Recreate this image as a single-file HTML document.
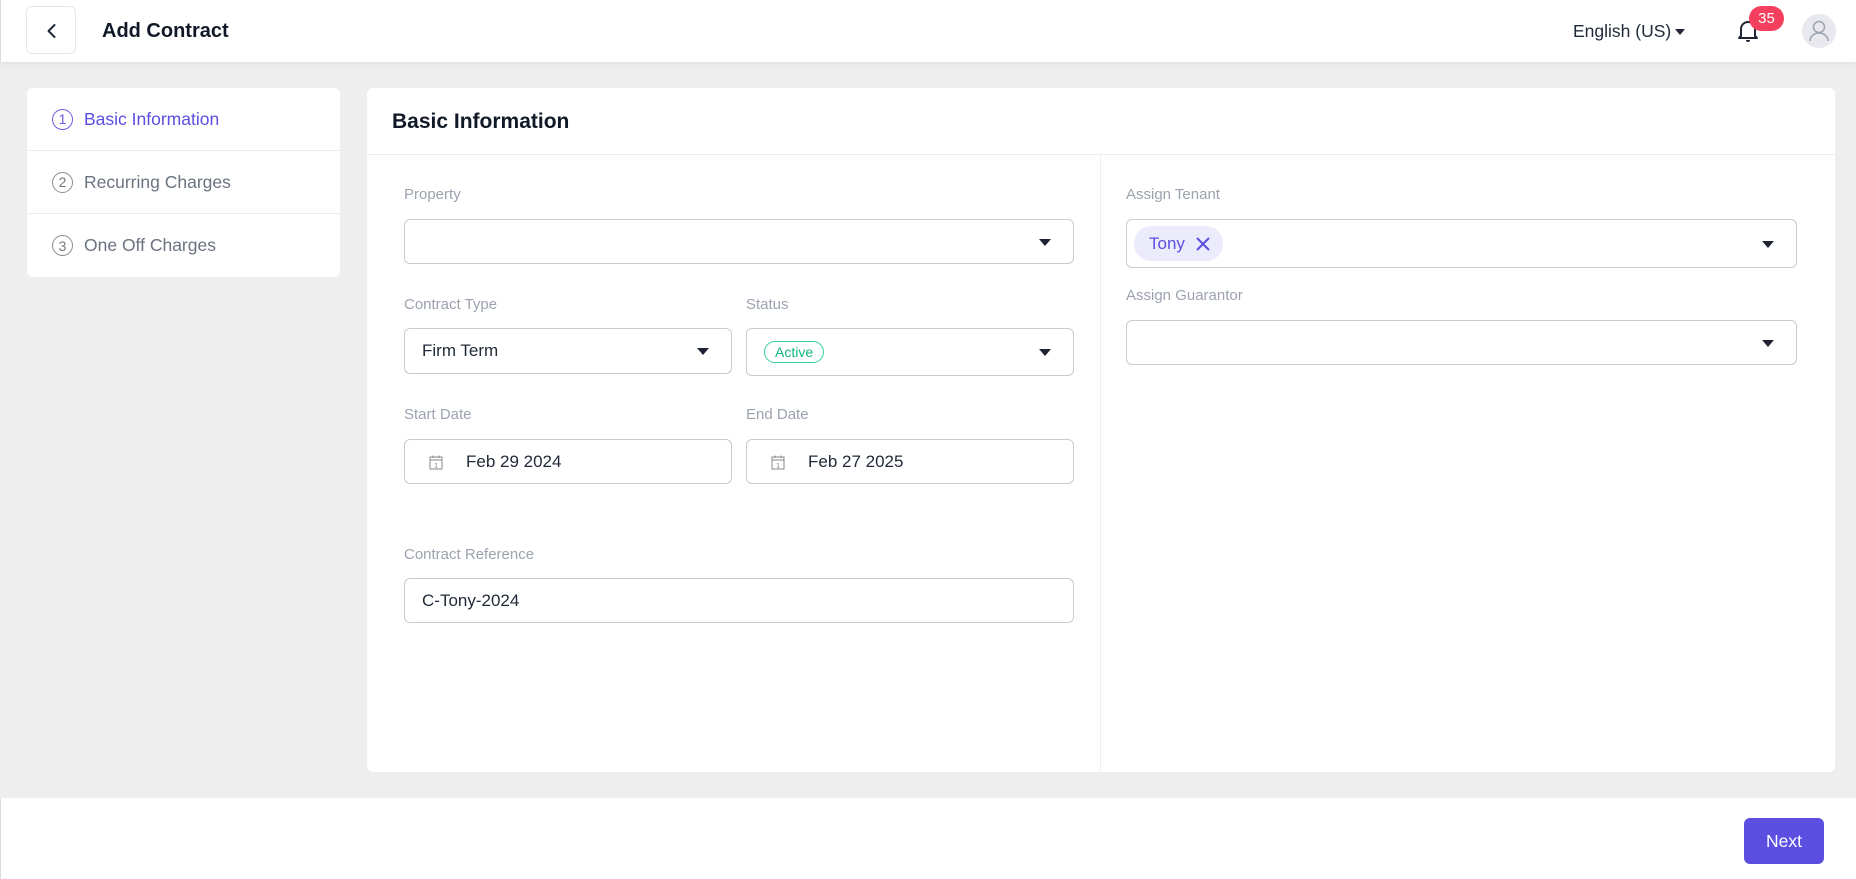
<!DOCTYPE html>
<html><head><meta charset="utf-8"><style>
*{box-sizing:border-box;margin:0;padding:0}
body{width:1856px;height:879px;background:#eeeeee;font-family:"Liberation Sans",sans-serif;position:relative;overflow:hidden;color:#1f2937}
.abs{position:absolute}
.hdr{left:0;top:0;width:1856px;height:62px;background:#fff;box-shadow:0 2px 6px rgba(0,0,0,.06);border-left:1px solid #ddd}
.back{left:26px;top:6px;width:50px;height:48px;border:1px solid #e5e7eb;border-radius:6px}
.side{left:27px;top:88px;width:313px;height:189px;background:#fff;border-radius:6px}
.item{position:absolute;left:0;width:313px;height:63px;border-bottom:1px solid #eee;display:flex;align-items:center;padding-left:25px;font-size:17.5px;color:#6b7280}
.item:last-child{border-bottom:none}
.num{width:21px;height:21px;border:1.3px solid #8b8b95;border-radius:50%;font-size:14px;display:flex;align-items:center;justify-content:center;margin-right:11px;color:#777}
.card{left:367px;top:88px;width:1468px;height:684px;background:#fff;border-radius:6px}
.lbl{position:absolute;font-size:15px;color:#9ca3af}
.inp{position:absolute;border:1px solid #c9cbd1;border-radius:6px;background:#fff;font-size:17px;color:#1f2937;display:flex;align-items:center;padding-left:17px}
.car{position:absolute;right:22px;top:50%;margin-top:-3px;width:0;height:0;border-left:6px solid transparent;border-right:6px solid transparent;border-top:7px solid #1f2333}
.foot{left:0;top:798px;width:1856px;height:81px;background:#fff;border-left:1px solid #ddd}
</style></head><body>
<div class="abs hdr"></div>
<div class="abs back"><svg width="50" height="48" viewBox="0 0 50 48"><path d="M27.5 18 L21.5 24 L27.5 30" fill="none" stroke="#1f2937" stroke-width="2" stroke-linecap="round" stroke-linejoin="round"/></svg></div>
<div class="abs" style="left:102px;top:20px;font-size:20px;font-weight:bold;color:#111827">Add Contract</div>
<div class="abs" style="left:1573px;top:21px;font-size:17.5px;color:#1f2937">English (US)</div>
<div class="abs" style="left:1675px;top:29px;border-left:5px solid transparent;border-right:5px solid transparent;border-top:6px solid #1f2333"></div>
<svg class="abs" style="left:1736px;top:18px" width="24" height="26" viewBox="0 0 24 26"><path d="M5 18 V11 a7 7 0 0 1 14 0 V18 L21 20 H3 Z" fill="none" stroke="#1f2333" stroke-width="2" stroke-linejoin="round"/><path d="M10 22 a2 2 0 0 0 4 0" fill="#1f2333"/></svg>
<div class="abs" style="left:1749px;top:6px;width:35px;height:25px;border-radius:13px;background:#f43f5e;color:#fff;font-size:15px;display:flex;align-items:center;justify-content:center">35</div>
<div class="abs" style="left:1802px;top:14px;width:34px;height:34px;border-radius:50%;background:#e8e8ee"><svg width="34" height="34" viewBox="0 0 34 34"><circle cx="17" cy="13" r="5.5" fill="none" stroke="#9ca3af" stroke-width="1.5"/><path d="M8 27 a9 8 0 0 1 18 0" fill="none" stroke="#9ca3af" stroke-width="1.5"/></svg></div>

<div class="abs side">
<div class="item" style="top:0;color:#5b4ee0"><span class="num" style="border-color:#6b5be6;color:#6b5be6">1</span>Basic Information</div>
<div class="item" style="top:63px"><span class="num">2</span>Recurring Charges</div>
<div class="item" style="top:126px;height:63px"><span class="num">3</span>One Off Charges</div>
</div>

<div class="abs card">
<div class="abs" style="left:25px;top:22px;font-size:21px;font-weight:bold;color:#111827">Basic Information</div>
<div class="abs" style="left:0;top:66px;width:1468px;height:1px;background:#eceef1"></div>
<div class="abs" style="left:733px;top:67px;width:1px;height:617px;background:#eceef1"></div>

<div class="lbl" style="left:37px;top:98px">Property</div>
<div class="inp" style="left:37px;top:131px;width:670px;height:45px"><span class="car"></span></div>

<div class="lbl" style="left:37px;top:208px">Contract Type</div>
<div class="inp" style="left:37px;top:240px;width:328px;height:46px">Firm Term<span class="car"></span></div>
<div class="lbl" style="left:379px;top:208px">Status</div>
<div class="inp" style="left:379px;top:240px;width:328px;height:48px"><span style="border:1px solid #34d399;color:#10b981;border-radius:12px;font-size:14px;padding:2px 10px">Active</span><span class="car"></span></div>

<div class="lbl" style="left:37px;top:318px">Start Date</div>
<div class="inp" style="left:37px;top:351px;width:328px;height:45px;padding-left:23px"><svg width="16" height="16" viewBox="0 0 16 16" style="margin-right:22px"><rect x="2" y="3" width="12" height="12" fill="none" stroke="#888" stroke-width="1"/><path d="M2 6H14M5 1.5V4M11 1.5V4" stroke="#888"/><text x="8" y="13.5" font-size="6" text-anchor="middle" fill="#666" font-family="Liberation Sans">1</text></svg>Feb 29 2024</div>
<div class="lbl" style="left:379px;top:318px">End Date</div>
<div class="inp" style="left:379px;top:351px;width:328px;height:45px;padding-left:23px"><svg width="16" height="16" viewBox="0 0 16 16" style="margin-right:22px"><rect x="2" y="3" width="12" height="12" fill="none" stroke="#888" stroke-width="1"/><path d="M2 6H14M5 1.5V4M11 1.5V4" stroke="#888"/><text x="8" y="13.5" font-size="6" text-anchor="middle" fill="#666" font-family="Liberation Sans">1</text></svg>Feb 27 2025</div>

<div class="lbl" style="left:37px;top:458px">Contract Reference</div>
<div class="inp" style="left:37px;top:490px;width:670px;height:45px">C-Tony-2024</div>

<div class="lbl" style="left:759px;top:98px">Assign Tenant</div>
<div class="inp" style="left:759px;top:131px;width:671px;height:49px;padding-left:7px"><span style="background:#ecebfc;color:#5b4ee0;border-radius:17px;height:35px;padding:0 11px 0 15px;display:flex;align-items:center;font-size:17px">Tony<svg width="18" height="18" viewBox="0 0 18 18" style="margin-left:9px"><path d="M3 3L15 15M15 3L3 15" stroke="#5b4ee0" stroke-width="2"/></svg></span><span class="car"></span></div>
<div class="lbl" style="left:759px;top:199px">Assign Guarantor</div>
<div class="inp" style="left:759px;top:232px;width:671px;height:45px"><span class="car"></span></div>
</div>

<div class="abs foot"></div>
<div class="abs" style="left:1744px;top:818px;width:80px;height:46px;background:#5b4ee0;border-radius:6px;color:#fff;font-size:17.5px;display:flex;align-items:center;justify-content:center">Next</div>
</body></html>
